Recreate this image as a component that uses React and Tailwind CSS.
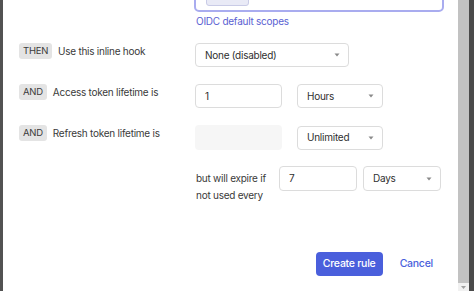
import React from "react";

const Badge = ({ children }) => (
  <span className="inline-flex h-[16px] items-center rounded-[3px] bg-[#e4e4e4] px-[4px] text-[9.5px] leading-none text-[#3b3b3b]">
    {children}
  </span>
);

const Chevron = () => (
  <svg width="6" height="4" viewBox="0 0 6 4" className="shrink-0">
    <path d="M0.5 0.5 L3 3.5 L5.5 0.5 Z" fill="#8a8a8a" />
  </svg>
);

const Select = ({ value, className }) => (
  <div
    className={`flex h-[24px] items-center justify-between rounded-[4px] border border-[#dcdcdc] bg-white pl-[9px] pr-[8px] text-[10px] text-[#2f2f2f] ${className}`}
  >
    <span>{value}</span>
    <Chevron />
  </div>
);

const Input = ({ value, className, disabled }) => (
  <div
    className={`flex h-[24px] items-center rounded-[4px] pl-[9px] text-[10px] text-[#2f2f2f] ${
      disabled ? "bg-[#f6f6f6]" : "border border-[#dcdcdc] bg-white"
    } ${className}`}
  >
    {value}
  </div>
);

const Row = ({ badge, label, children }) => (
  <div className="flex items-start">
    <div className="flex w-[176px] items-center gap-[6px]">
      <Badge>{badge}</Badge>
      <span className="text-[10px] text-[#3a3a3a]">{label}</span>
    </div>
    <div className="flex items-center gap-[15px]">{children}</div>
  </div>
);

export default function App() {
  return (
    <div
      className="flex h-[291px] w-[474px] overflow-hidden bg-white tracking-[-0.25px]"
      style={{ fontFamily: "Inter, 'Liberation Sans', sans-serif" }}
    >
      <div className="w-[3px] bg-[#525252]" />

      <main className="flex flex-1 flex-col pl-[16px]">
        {/* scopes field, scrolled partly out of view */}
        <div className="ml-[175px] mt-[-18px] flex h-[30px] w-[250px] items-end rounded-[5px] border-2 border-[#a9acef] pb-[4px] pl-[10px]">
          <span className="h-[20px] w-[43px] rounded-[3px] border border-[#c9cbe6] bg-[#e9eaf6]" />
          <span className="ml-[8px] mb-[6px] h-[6px] w-px bg-[#333]" />
        </div>
        <a className="ml-[177px] mt-[2px] text-[10px] leading-[14px] text-[#5a61d2]">
          OIDC default scopes
        </a>

        <div className="mt-[15px] flex flex-col gap-[17px]">
          <Row badge="THEN" label="Use this inline hook">
            <Select value="None (disabled)" className="w-[154px]" />
          </Row>
          <Row badge="AND" label="Access token lifetime is">
            <Input value="1" className="w-[87px]" />
            <Select value="Hours" className="w-[86px]" />
          </Row>
          <Row badge="AND" label="Refresh token lifetime is">
            <Input disabled className="w-[87px] h-[25px]" />
            <Select value="Unlimited" className="w-[86px]" />
          </Row>
        </div>

        <div className="ml-[177px] mt-[16px] flex items-start">
          <p className="w-[83px] pt-[4px] text-[10px] leading-[17px] text-[#3a3a3a]">
            but will expire if
            <br />
            not used every
          </p>
          <Input value="7" className="h-[25px] w-[78px]" />
          <Select value="Days" className="ml-[6px] h-[25px] w-[78px]" />
        </div>

        <div className="mt-auto mb-[15px] flex items-center justify-end gap-[17px] pr-[25px]">
          <button className="h-[24px] w-[67px] rounded-[4px] bg-[#4a5fdc] text-[10.5px] font-medium text-white">
            Create rule
          </button>
          <button className="text-[10.5px] font-medium text-[#4a5fdc]">Cancel</button>
        </div>
      </main>

      <div className="flex w-[11px] flex-col bg-[#c2c2c2]">
        <div className="flex-1" />
        <div className="flex h-[8px] items-center justify-center bg-[#f1f1f1]">
          <svg width="5" height="3" viewBox="0 0 5 3">
            <path d="M0 0 L5 0 L2.5 3 Z" fill="#a0a0a0" />
          </svg>
        </div>
      </div>
      <div className="w-[5px] bg-[#4a4a4a]" />
    </div>
  );
}
